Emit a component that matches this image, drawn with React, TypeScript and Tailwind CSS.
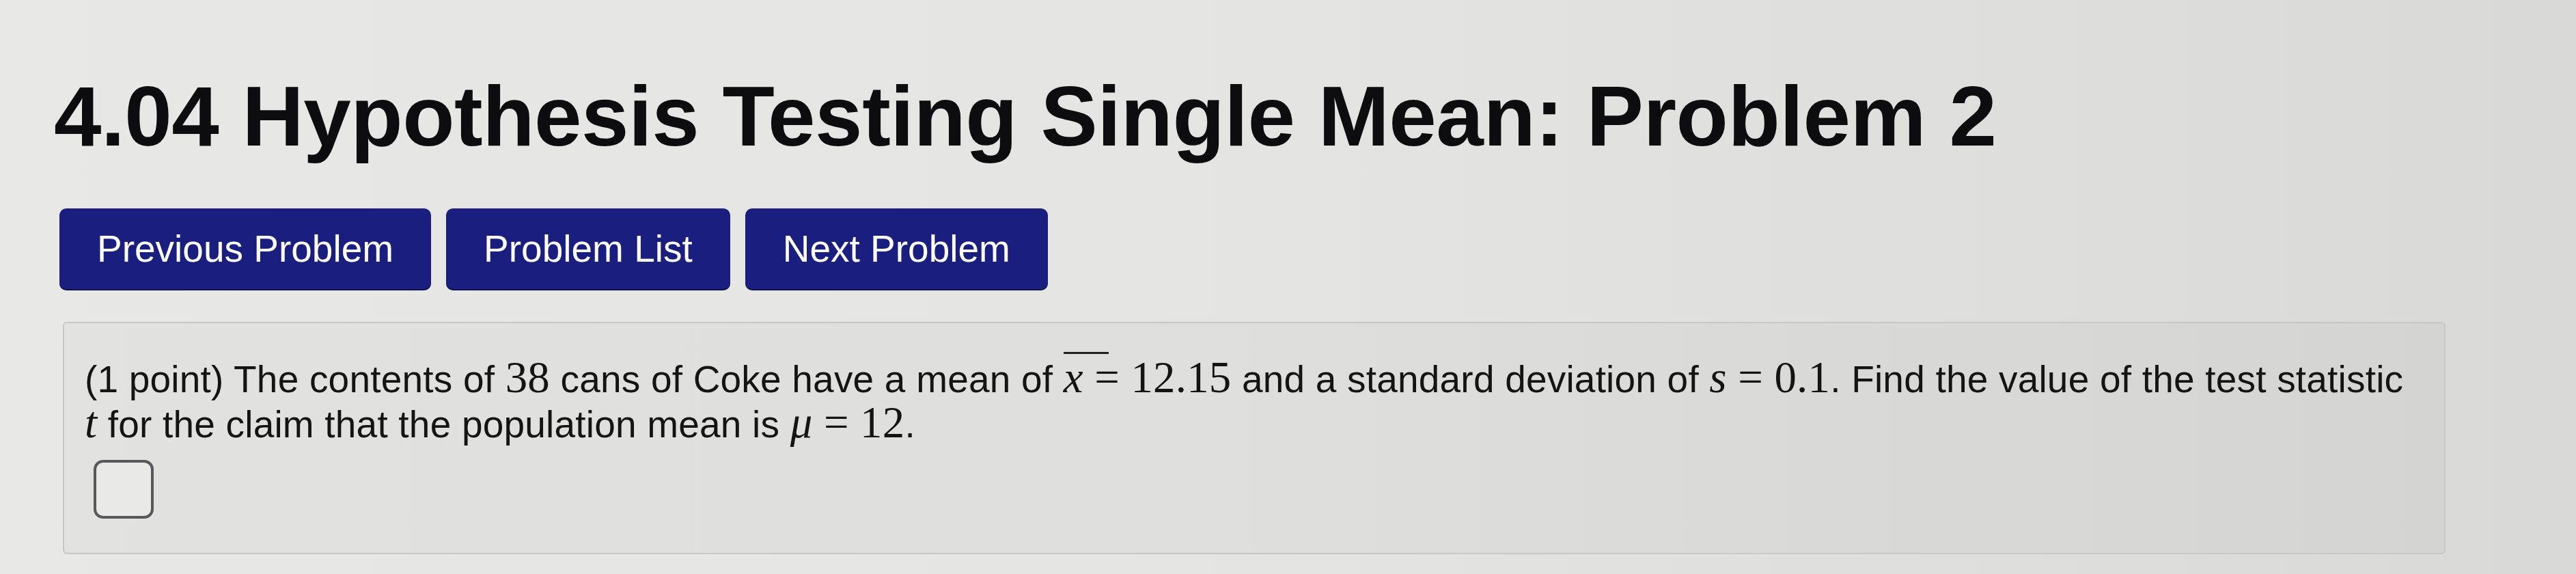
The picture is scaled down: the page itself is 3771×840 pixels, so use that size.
import React from 'react';

const NavButton: React.FC<{ label: string }> = ({ label }) => (
    <button className="h-[118px] px-[55px] rounded-[10px] bg-[#1a1e7e] text-white text-[55px] leading-none shadow-[0_2px_0_#0f1250]">
        {label}
    </button>
);

const M: React.FC<{ children: React.ReactNode; italic?: boolean }> = ({ children, italic }) => (
    <span className={`font-['Liberation_Serif','Times_New_Roman',serif] text-[1.18em] ${italic ? 'italic' : ''}`}>
        {children}
    </span>
);

export default function App() {
    return (
        <div className="min-h-[840px] bg-gradient-to-r from-[#e8e9e6] via-[#e4e5e2] to-[#d9dad7] px-[79px] pt-[107px] pb-[20px] font-['Liberation_Sans',Arial,sans-serif] text-[#141414]">
            <h1 className="text-[125px] font-bold leading-none tracking-[-0.5px] text-[#0d0d0f]">
                4.04 Hypothesis Testing Single Mean: Problem 2
            </h1>

            <div className="mt-[73px] ml-[8px] flex gap-[22px]">
                <NavButton label="Previous Problem" />
                <NavButton label="Problem List" />
                <NavButton label="Next Problem" />
            </div>

            <div className="mt-[48px] ml-[13px] w-[3488px] rounded-[6px] border-2 border-[#c7c8c5] bg-black/[0.025] pl-[30px] pr-[50px] pt-[42px] pb-[50px]">
                <p className="text-[55px] leading-[63px] tracking-[0.2px]">
                    (1 point) The contents of <M>38</M> cans of Coke have a mean of{' '}
                    <M>
                        <span className="inline-block border-t-[3px] border-[#222] leading-[1.05] pr-[0.58em] -mr-[0.58em]">
                            <span className="italic">x</span>
                        </span>
                        {' '}= 12.15
                    </M>{' '}
                    and a standard deviation of <M><span className="italic">s</span> = 0.1</M>. Find the value of the test statistic{' '}
                    <M italic>t</M> for the claim that the population mean is <M><span className="italic">μ</span> = 12</M>.
                </p>
                <div className="mt-[20px] ml-[13px] h-[86px] w-[88px] rounded-[14px] border-[4px] border-[#58585c] bg-[#e9eae7]" />
            </div>
        </div>
    );
}
